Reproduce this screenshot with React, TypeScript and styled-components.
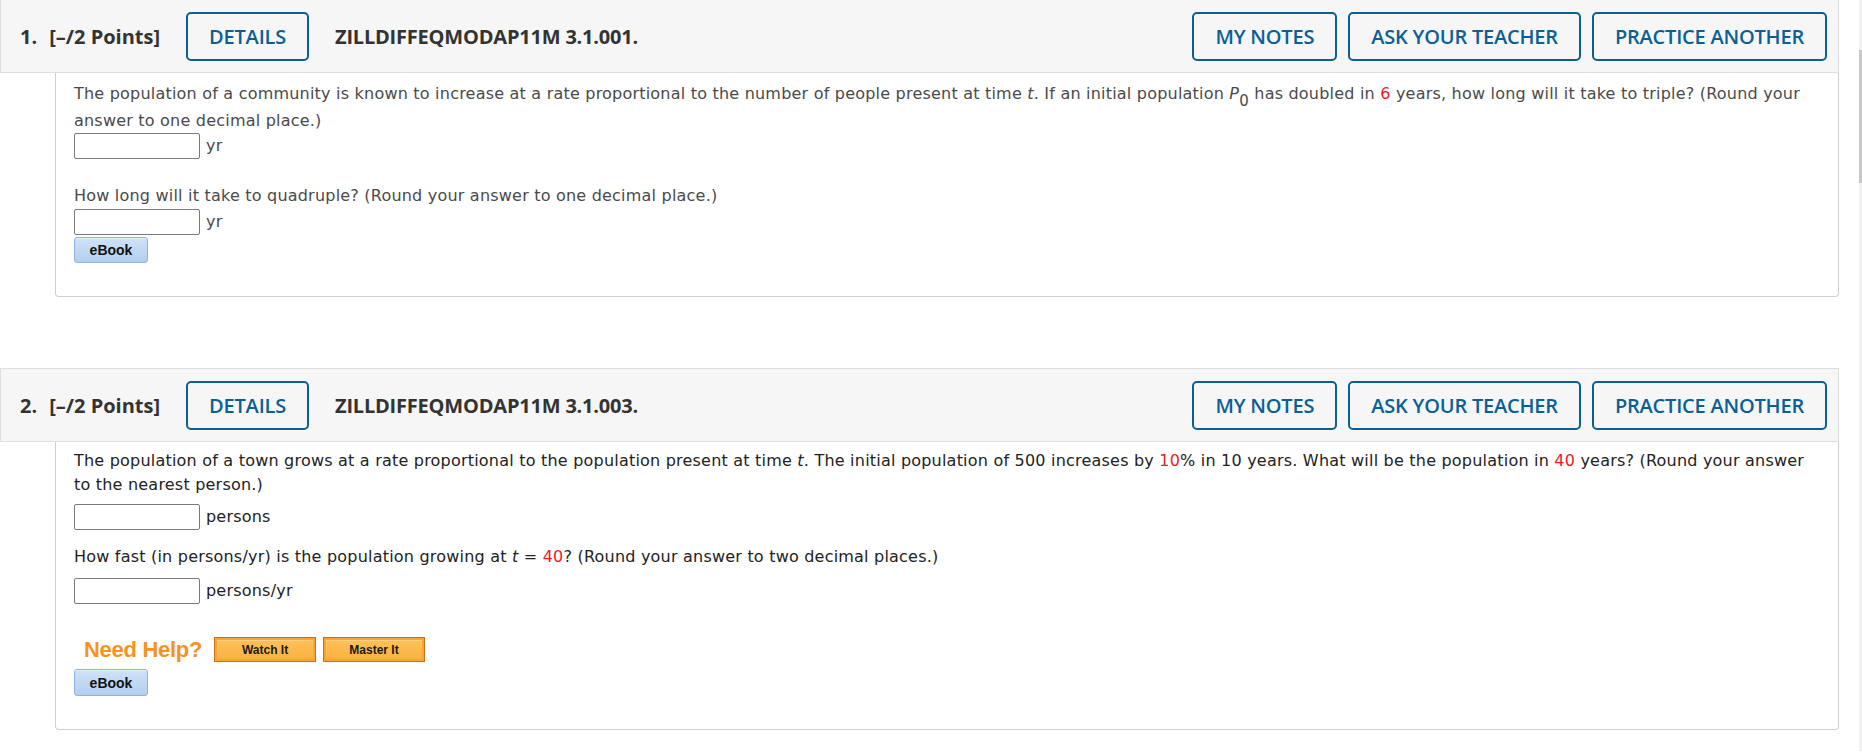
import React from 'react'
import styled, { createGlobalStyle } from 'styled-components'

const GlobalStyle = createGlobalStyle`
    html, body {
        margin: 0;
        padding: 0;
        background: #fff;
    }
    body {
        font-family: "DejaVu Sans", Verdana, sans-serif;
    }
`

const BLUE = '#0a5f96'

const App = () => {
    return (
        <>
            <GlobalStyle />
            <Page>
                <Main>
                    <Question>
                        <Header>
                            <Num>1.</Num>
                            <Points>[–/2 Points]</Points>
                            <OutlineButton type="button">DETAILS</OutlineButton>
                            <Code>ZILLDIFFEQMODAP11M 3.1.001.</Code>
                            <Actions>
                                <OutlineButton type="button">MY NOTES</OutlineButton>
                                <OutlineButton type="button">ASK YOUR TEACHER</OutlineButton>
                                <OutlineButton type="button">PRACTICE ANOTHER</OutlineButton>
                            </Actions>
                        </Header>
                        <Body tone="#4a4a4a" top={9} bottom={33}>
                            <Prompt>
                                The population of a community is known to increase at a rate proportional to the number of people present at time <Var>t</Var>. If an initial population <Var>P</Var><Sub>0</Sub> has doubled in <Red>6</Red> years, how long will it take to triple? (Round your answer to one decimal place.)
                            </Prompt>
                            <AnswerRow>
                                <AnswerInput type="text" />
                                <Unit>yr</Unit>
                            </AnswerRow>
                            <Prompt top={25}>How long will it take to quadruple? (Round your answer to one decimal place.)</Prompt>
                            <AnswerRow top={1}>
                                <AnswerInput type="text" />
                                <Unit>yr</Unit>
                            </AnswerRow>
                            <EBook type="button" top={2} tall={26}>eBook</EBook>
                        </Body>
                    </Question>

                    <Question gap={71}>
                        <Header>
                            <Num>2.</Num>
                            <Points>[–/2 Points]</Points>
                            <OutlineButton type="button">DETAILS</OutlineButton>
                            <Code>ZILLDIFFEQMODAP11M 3.1.003.</Code>
                            <Actions>
                                <OutlineButton type="button">MY NOTES</OutlineButton>
                                <OutlineButton type="button">ASK YOUR TEACHER</OutlineButton>
                                <OutlineButton type="button">PRACTICE ANOTHER</OutlineButton>
                            </Actions>
                        </Header>
                        <Body tone="#222" top={7} bottom={33}>
                            <Prompt>
                                The population of a town grows at a rate proportional to the population present at time <Var>t</Var>. The initial population of 500 increases by <Red>10</Red>% in 10 years. What will be the population in <Red>40</Red> years? (Round your answer to the nearest person.)
                            </Prompt>
                            <AnswerRow top={7}>
                                <AnswerInput type="text" />
                                <Unit>persons</Unit>
                            </AnswerRow>
                            <Prompt top={15}>How fast (in persons/yr) is the population growing at <Var>t</Var> = <Red>40</Red>? (Round your answer to two decimal places.)</Prompt>
                            <AnswerRow top={9}>
                                <AnswerInput type="text" />
                                <Unit>persons/yr</Unit>
                            </AnswerRow>
                            <HelpRow>
                                <HelpTitle>Need Help?</HelpTitle>
                                <HelpButton type="button">Watch It</HelpButton>
                                <HelpButton type="button">Master It</HelpButton>
                            </HelpRow>
                            <EBook type="button" top={7} tall={27}>eBook</EBook>
                        </Body>
                    </Question>
                </Main>
                <Gutter />
                <Rail>
                    <Thumb />
                </Rail>
            </Page>
        </>
    )
}

/* PAGE */

const Page = styled.div`
    display: flex;
    flex-direction: row;
    align-items: flex-start;
    width: 1862px;
    height: 752px;
    overflow: hidden;
    margin-top: -1px;
`

const Main = styled.div`
    flex: 0 0 1839px;
    display: flex;
    flex-direction: column;
`

const Gutter = styled.div`
    flex: 0 0 20px;
`

const Rail = styled.div`
    flex: 0 0 3px;
    height: 753px;
    background: #f1f1f1;
    display: flex;
    flex-direction: column;
`

const Thumb = styled.div`
    margin-top: 51px;
    height: 133px;
    background: #c8c8c8;
`

/* QUESTION HEADER */

const Question = styled.section<{gap?: number}>`
    display: flex;
    flex-direction: column;
    margin-top: ${({gap}) => gap || 0}px;
`

const Header = styled.div`
    display: flex;
    flex-direction: row;
    align-items: center;
    height: 74px;
    box-sizing: border-box;
    padding: 0 11px 0 19px;
    background: #f6f6f6;
    border: 1px solid #dedede;
    font-family: "Open Sans", "Liberation Sans", sans-serif;
    color: #333;
`

const Num = styled.span`
    font-size: 20px;
    font-weight: 700;
    margin-right: 12px;
`

const Points = styled.span`
    font-size: 20px;
    font-weight: 700;
    margin-right: 26px;
`

const Code = styled.span`
    font-size: 20px;
    font-weight: 700;
    margin-left: 26px;
    letter-spacing: -0.2px;
`

const Actions = styled.div`
    display: flex;
    flex-direction: row;
    gap: 11px;
    margin-left: auto;
`

const OutlineButton = styled.button`
    height: 49px;
    box-sizing: border-box;
    padding: 0 21px;
    border: 2px solid ${BLUE};
    border-radius: 5px;
    background: transparent;
    color: ${BLUE};
    font-family: "Open Sans", "Liberation Sans", sans-serif;
    font-size: 20px;
    font-weight: 600;
    letter-spacing: -0.2px;
    cursor: pointer;
`

/* QUESTION BODY */

const Body = styled.div<{tone: string, top: number, bottom: number}>`
    display: flex;
    flex-direction: column;
    margin-left: 55px;
    padding: ${({top}) => top}px 18px ${({bottom}) => bottom}px 18px;
    border: 1px solid #cfcfcf;
    border-top: none;
    border-radius: 0 0 4px 4px;
    color: ${({tone}) => tone};
    font-family: "DejaVu Sans", Verdana, sans-serif;
    font-size: 16px;
    line-height: 24px;
    letter-spacing: 0.21px;
`

const Prompt = styled.p<{top?: number}>`
    margin: ${({top}) => top || 0}px 0 0 0;
`

const Var = styled.i`
    font-style: italic;
`

const Sub = styled.sub`
    font-size: 15px;
    line-height: 15px;
    vertical-align: -7px;
`

const Red = styled.span`
    color: #ec1c24;
`

const AnswerRow = styled.div<{top?: number}>`
    display: flex;
    flex-direction: row;
    align-items: center;
    height: 26px;
    margin-top: ${({top}) => top || 0}px;
`

const AnswerInput = styled.input`
    width: 126px;
    height: 26px;
    box-sizing: border-box;
    margin: 0;
    border: 1px solid #7a7a7a;
    border-radius: 2px;
    background: #fff;
`

const Unit = styled.span`
    margin-left: 6px;
`

const EBook = styled.button<{top?: number, tall: number}>`
    align-self: flex-start;
    display: block;
    width: 74px;
    height: ${({tall}) => tall}px;
    margin-top: ${({top}) => top || 0}px;
    padding: 0;
    border: 1px solid #8fb3dc;
    border-radius: 3px;
    background: linear-gradient(#cfe2f8, #b2cff0);
    box-shadow: inset 0 1px 0 #e4effb;
    color: #111;
    font-family: "Liberation Sans", Arial, sans-serif;
    font-size: 14px;
    font-weight: 700;
    letter-spacing: 0;
    cursor: pointer;
`

const HelpRow = styled.div`
    display: flex;
    flex-direction: row;
    align-items: center;
    height: 25px;
    margin-top: 33px;
    padding-left: 10px;
`

const HelpTitle = styled.span`
    font-family: "Liberation Sans", Arial, sans-serif;
    font-size: 22px;
    font-weight: 700;
    color: #f7921e;
    margin-right: 12px;
    letter-spacing: -0.3px;
`

const HelpButton = styled.button`
    width: 102px;
    height: 25px;
    margin-right: 7px;
    padding: 0;
    border: 1px solid #c8731c;
    background: linear-gradient(#fdc35a, #fbb03d);
    box-shadow: inset 0 0 0 2px #f7a53a, inset 0 3px 0 #fdd08a;
    color: #1a1a1a;
    font-family: "Liberation Sans", Arial, sans-serif;
    font-size: 12px;
    font-weight: 700;
    letter-spacing: 0;
    cursor: pointer;
`

export default App
